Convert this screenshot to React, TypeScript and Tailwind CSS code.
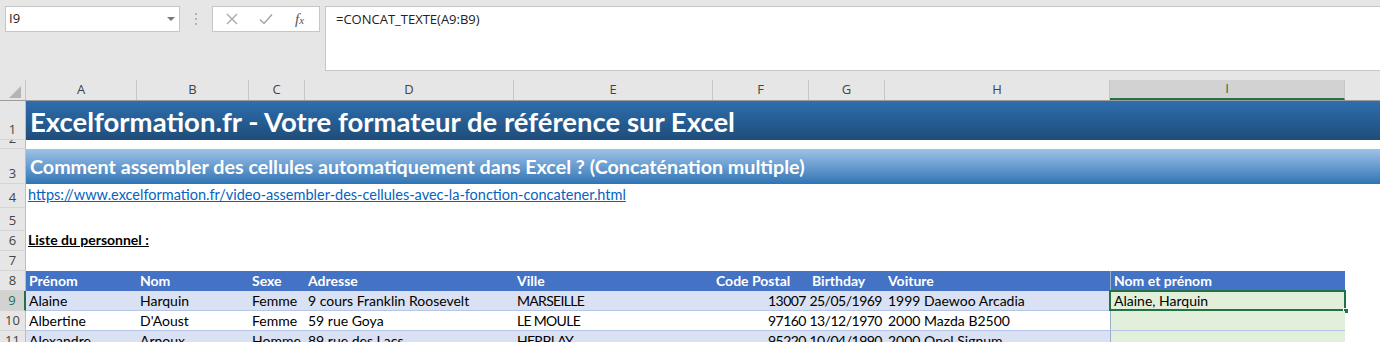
import React from 'react';

const COLS = [
  { key: 'A', w: 111 },
  { key: 'B', w: 112 },
  { key: 'C', w: 56 },
  { key: 'D', w: 209 },
  { key: 'E', w: 199 },
  { key: 'F', w: 96 },
  { key: 'G', w: 76 },
  { key: 'H', w: 225 },
  { key: 'I', w: 235 },
];

const HEADERS = ['Prénom', 'Nom', 'Sexe', 'Adresse', 'Ville', 'Code Postal', 'Birthday', 'Voiture', 'Nom et prénom'];

const ROWS = [
  ['Alaine', 'Harquin', 'Femme', '9 cours Franklin Roosevelt', 'MARSEILLE', '13007', '25/05/1969', '1999 Daewoo Arcadia', 'Alaine, Harquin'],
  ["Albertine", "D'Aoust", 'Femme', '59 rue Goya', 'LE MOULE', '97160', '13/12/1970', '2000 Mazda B2500', ''],
  ['Alexandre', 'Arnoux', 'Homme', '89 rue des Lacs', 'HERBLAY', '95220', '10/04/1990', '2000 Opel Signum', ''],
];

const RIGHT = [5, 6];

function RowHeader({ n, h, selected }: { n: number; h: number; selected?: boolean }) {
  return (
    <div
      className={
        'w-[26px] shrink-0 flex items-end justify-center overflow-hidden border-b border-[#d4d4d4] text-[13px] leading-[17px] ' +
        (selected
          ? 'bg-[#d2d2d2] text-[#217346] border-r-2 border-r-[#217346]'
          : 'bg-[#e6e6e6] text-[#444] border-r border-r-[#bdbdbd]')
      }
      style={{ height: h, fontFamily: '"Open Sans", sans-serif' }}
    >
      <span className="pb-[1px]">{n}</span>
    </div>
  );
}

function Cross() {
  return (
    <svg width="12" height="12" viewBox="0 0 12 12">
      <path d="M1 1 L11 11 M11 1 L1 11" stroke="#a6a6a6" strokeWidth="1.3" fill="none" />
    </svg>
  );
}

function Check() {
  return (
    <svg width="14" height="12" viewBox="0 0 14 12">
      <path d="M1 6.5 L5 10.5 L13 1.5" stroke="#a6a6a6" strokeWidth="1.5" fill="none" />
    </svg>
  );
}

export default function App() {
  const cell = { fontFamily: 'Lato, "Liberation Sans", sans-serif' };
  const ui = { fontFamily: '"Open Sans", "Noto Sans", sans-serif' };

  return (
    <div className="w-[1380px] h-[342px] overflow-hidden bg-white">
      {/* formula bar area */}
      <div className="h-[80px] bg-[#e6e6e6] flex items-start pt-[6px] pl-[5px]" style={ui}>
        <div className="w-[175px] h-[26px] bg-white border border-[#c6c6c6] flex items-center justify-between pl-[3px] pr-[4px] text-[13px] text-[#222]">
          <span>I9</span>
          <span className="w-0 h-0 border-l-[4px] border-r-[4px] border-t-[4px] border-l-transparent border-r-transparent border-t-[#777]" />
        </div>
        <div className="w-[32px] h-[26px] flex flex-col items-center justify-center gap-[3px]">
          <span className="w-[2px] h-[2px] bg-[#b4b4b4]" />
          <span className="w-[2px] h-[2px] bg-[#b4b4b4]" />
          <span className="w-[2px] h-[2px] bg-[#b4b4b4]" />
        </div>
        <div className="w-[108px] h-[26px] bg-white border border-[#c6c6c6] flex items-center justify-around pl-[2px] pr-[4px]">
          <Cross />
          <Check />
          <span className="text-[#555] text-[15px] italic" style={{ fontFamily: '"Liberation Serif", serif' }}>
            f<span className="text-[11px]">x</span>
          </span>
        </div>
        <div className="ml-[5px] flex-1 h-[65px] bg-white border border-[#c6c6c6] border-r-0 pl-[10px] pt-[3px] text-[13px] text-[#222]">
          =CONCAT_TEXTE(A9:B9)
        </div>
      </div>

      {/* column headers */}
      <div className="h-[21px] flex bg-[#e6e6e6] border-b border-[#9c9c9c] text-[13px] text-[#444]" style={ui}>
        <div className="w-[26px] shrink-0 border-r border-[#c6c6c6] flex items-end justify-end pr-[4px] pb-[2px]">
          <svg width="12" height="12" viewBox="0 0 12 12">
            <path d="M12 0 L12 12 L0 12 Z" fill="#b4b4b4" />
          </svg>
        </div>
        {COLS.map((c) => (
          <div
            key={c.key}
            className={
              'shrink-0 flex items-center justify-center border-r border-[#c6c6c6] ' +
              (c.key === 'I' ? 'bg-[#d2d2d2] border-b-2 border-b-[#217346] text-[#217346]' : '')
            }
            style={{ width: c.w }}
          >
            {c.key}
          </div>
        ))}
        <div className="flex-1" />
      </div>

      {/* row 1 */}
      <div className="flex">
        <RowHeader n={1} h={39} />
        <div
          className="flex-1 h-[39px] bg-gradient-to-b from-[#2e6eae] to-[#1f4d7a] text-white font-bold text-[27.5px] leading-[39px] flex items-center pl-[4px] pt-[1px] whitespace-nowrap"
          style={cell}
        >
          Excelformation.fr - Votre formateur de référence sur Excel
        </div>
      </div>

      {/* row 2 */}
      <div className="flex">
        <RowHeader n={2} h={9} />
        <div className="flex-1 h-[9px] bg-white" />
      </div>

      {/* row 3 */}
      <div className="flex">
        <RowHeader n={3} h={35} />
        <div
          className="flex-1 h-[35px] bg-gradient-to-b from-[#9dc3e6] to-[#2f74b5] text-white font-bold text-[19.7px] flex items-center pl-[4px] whitespace-nowrap"
          style={cell}
        >
          Comment assembler des cellules automatiquement dans Excel ? (Concaténation multiple)
        </div>
      </div>

      {/* row 4 */}
      <div className="flex">
        <RowHeader n={4} h={24} />
        <div className="flex-1 h-[24px] flex items-end pb-[2px] pl-[2px] text-[14.5px] text-[#0563c1] underline whitespace-nowrap" style={cell}>
          https://www.excelformation.fr/video-assembler-des-cellules-avec-la-fonction-concatener.html
        </div>
      </div>

      {/* row 5 */}
      <div className="flex">
        <RowHeader n={5} h={23} />
        <div className="flex-1 h-[23px]" />
      </div>

      {/* row 6 */}
      <div className="flex">
        <RowHeader n={6} h={20} />
        <div className="flex-1 h-[20px] flex items-end pb-[1px] pl-[2px] text-[14px] font-bold underline text-black whitespace-nowrap" style={cell}>
          Liste du personnel :
        </div>
      </div>

      {/* row 7 */}
      <div className="flex">
        <RowHeader n={7} h={20} />
        <div className="flex-1 h-[20px]" />
      </div>

      {/* row 8 table header */}
      <div className="flex">
        <RowHeader n={8} h={20} />
        <div className="flex h-[20px] bg-[#4472c4] text-white font-bold text-[14px] leading-[20px]" style={cell}>
          {COLS.map((c, i) => (
            <div
              key={c.key}
              className={'shrink-0 flex items-center pl-[3px] whitespace-nowrap ' + (c.key === 'I' ? 'border-l border-[#9bb0c8]' : '')}
              style={{ width: c.w }}
            >
              {HEADERS[i]}
            </div>
          ))}
        </div>
      </div>

      {/* data rows */}
      {ROWS.map((r, ri) => (
        <div className="flex" key={ri}>
          <RowHeader n={9 + ri} h={20} selected={ri === 0} />
          <div
            className={'flex h-[20px] text-[14px] leading-[19px] text-black border-b border-[#b4c6e7] ' + (ri % 2 === 0 ? 'bg-[#d9e1f2]' : 'bg-white')}
            style={cell}
          >
            {COLS.map((c, ci) => {
              const isI = c.key === 'I';
              const sel = isI && ri === 0;
              const right = RIGHT.includes(ci);
              return (
                <div
                  key={c.key}
                  className={
                    'shrink-0 flex items-center whitespace-nowrap relative ' +
                    (right ? 'justify-end pr-[3px] tracking-[-0.5px] ' : 'pl-[3px] ') +
                    (ci === 4 ? 'tracking-[-0.7px] ' : '') +
                    (isI ? 'bg-[#e2efda] border-l border-[#9bb0c8] ' : '') +
                    (sel ? 'outline-2 outline-[#217346] -outline-offset-1 ' : '')
                  }
                  style={{ width: c.w }}
                >
                  {r[ci]}
                  {sel && (
                    <span className="absolute right-[-4px] bottom-[-4px] w-[6px] h-[6px] bg-[#217346] border border-white" />
                  )}
                </div>
              );
            })}
          </div>
        </div>
      ))}
    </div>
  );
}
